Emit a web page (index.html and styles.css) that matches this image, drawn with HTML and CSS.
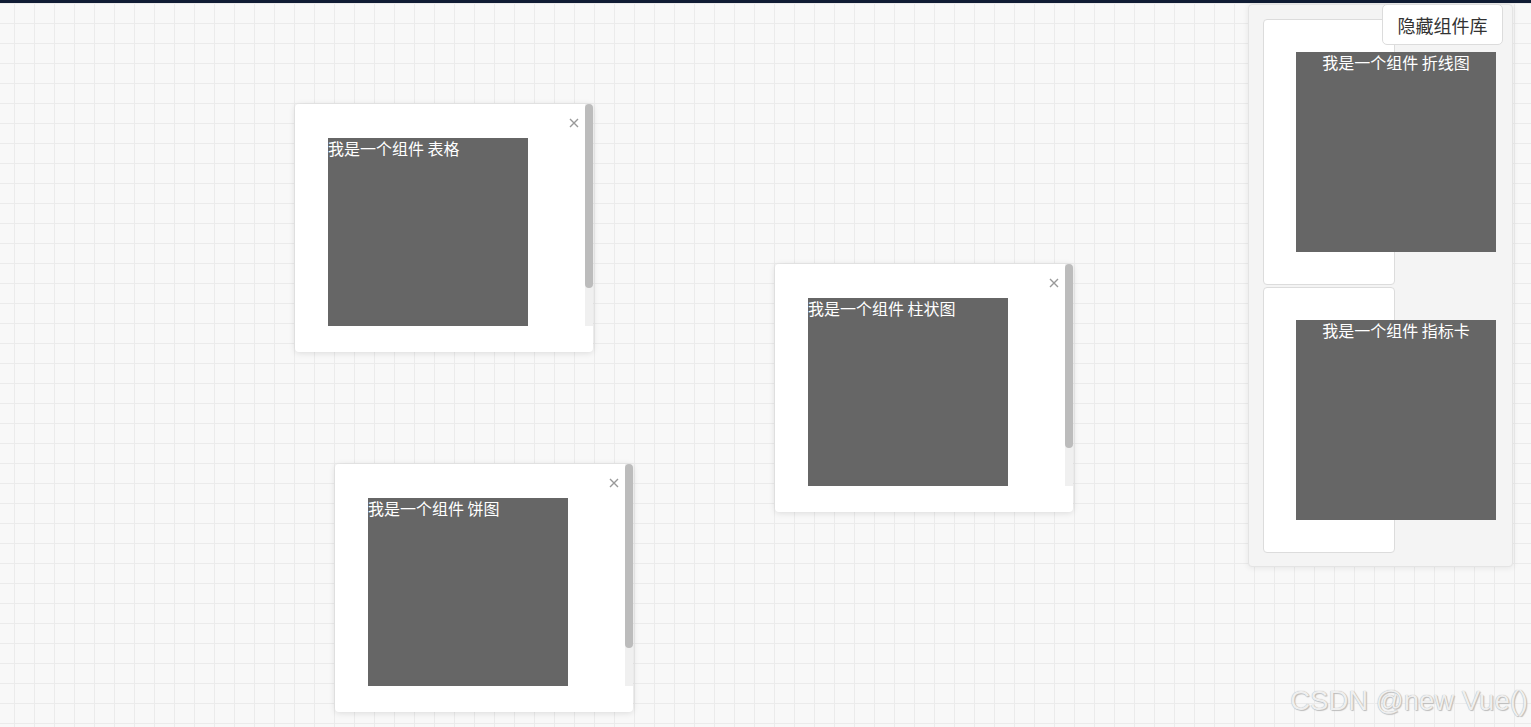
FILE: index.html
```html
<!DOCTYPE html>
<html lang="zh">
<head>
<meta charset="utf-8">
<title>组件画布</title>
<link rel="stylesheet" href="styles.css">
</head>
<body>
<div class="topbar"></div>
<main class="canvas">
  <section class="win" style="left:295px;top:104px">
    <button class="close" aria-label="关闭"><svg viewBox="0 0 10 10" width="10" height="10"><path d="M1 1L9 9M9 1L1 9"/></svg></button>
    <div class="win-body">
      <div class="scroll">
        <div class="block">我是一个组件 表格</div>
      </div>
      <div class="scrollbar"><div class="thumb"></div></div>
    </div>
  </section>
  <section class="win" style="left:775px;top:264px">
    <button class="close" aria-label="关闭"><svg viewBox="0 0 10 10" width="10" height="10"><path d="M1 1L9 9M9 1L1 9"/></svg></button>
    <div class="win-body">
      <div class="scroll">
        <div class="block">我是一个组件 柱状图</div>
      </div>
      <div class="scrollbar"><div class="thumb"></div></div>
    </div>
  </section>
  <section class="win" style="left:335px;top:464px">
    <button class="close" aria-label="关闭"><svg viewBox="0 0 10 10" width="10" height="10"><path d="M1 1L9 9M9 1L1 9"/></svg></button>
    <div class="win-body">
      <div class="scroll">
        <div class="block">我是一个组件 饼图</div>
      </div>
      <div class="scrollbar"><div class="thumb"></div></div>
    </div>
  </section>

  <aside class="library">
    <div class="lib-list">
      <div class="lib-item"><div class="block centered">我是一个组件 折线图</div></div>
      <div class="lib-item"><div class="block centered">我是一个组件 指标卡</div></div>
    </div>
    <button class="toggle">隐藏组件库</button>
  </aside>

  <div class="watermark">CSDN @new Vue()</div>
</main>
</body>
</html>
```
FILE: styles.css
```css
html, body {
  margin: 0;
  padding: 0;
  height: 100%;
  overflow: hidden;
}
body {
  font-family: "Noto Sans CJK SC", "Noto Sans", sans-serif;
  background-color: #f8f8f8;
  background-image:
    linear-gradient(to right, #ebebeb 1px, transparent 1px),
    linear-gradient(to bottom, #ebebeb 1px, transparent 1px);
  background-size: 20px 20px;
  background-position: 14px 23px;
}
.topbar {
  height: 3px;
  background: #101c34;
}
.canvas {
  position: relative;
  height: 724px;
}
.win {
  position: absolute;
  width: 298px;
  height: 248px;
  box-sizing: border-box;
  background: #fff;
  border-radius: 4px;
  box-shadow: 0 1px 6px rgba(0, 0, 0, 0.12);
  margin-top: -3px;
}
.win-body {
  display: flex;
  height: 222px;
}
.scroll {
  flex: 1;
  overflow: hidden;
  box-sizing: border-box;
  padding: 34px 0 0 33px;
}
.scrollbar {
  width: 8px;
  flex: none;
  background: #f0f0f0;
  border-top-right-radius: 4px;
}
.thumb {
  height: 184px;
  background: #bcbcbc;
  border-radius: 4px;
}
.close {
  position: absolute;
  top: 14px;
  right: 14px;
  width: 10px;
  height: 10px;
  padding: 0;
  border: 0;
  background: none;
  display: flex;
  z-index: 2;
}
.close svg path {
  stroke: #999;
  stroke-width: 1.4;
  fill: none;
}
.block {
  width: 200px;
  height: 200px;
  background: #666;
  color: #fff;
  font-size: 16px;
  line-height: 20px;
  flex: none;
}
.block.centered {
  text-align: center;
}
.library {
  position: absolute;
  left: 1248px;
  top: 1px;
  width: 265px;
  height: 563px;
  box-sizing: border-box;
  background: #f4f4f4;
  border: 1px solid #e4e4e4;
  border-radius: 4px;
  box-shadow: 0 1px 6px rgba(0, 0, 0, 0.08);
}
.lib-list {
  display: flex;
  flex-direction: column;
  gap: 2px;
  padding: 14px 0 0 14px;
}
.lib-item {
  width: 132px;
  height: 266px;
  box-sizing: border-box;
  padding: 32px;
  background: #fff;
  border: 1px solid #dcdcdc;
  border-radius: 4px;
}
.toggle {
  position: absolute;
  top: -1px;
  right: 9px;
  width: 121px;
  height: 41px;
  box-sizing: border-box;
  background: #fff;
  border: 1px solid #dcdcdc;
  border-radius: 5px;
  font-family: "Noto Sans CJK SC", "Noto Sans", sans-serif;
  font-size: 18px;
  color: #333;
  padding: 0;
}
.watermark {
  position: absolute;
  right: 3px;
  bottom: 13px;
  font-family: "Liberation Sans", Arial, sans-serif;
  font-size: 27.5px;
  line-height: 27px;
  color: #efefef;
  text-shadow: 0 0 1px #a0a0a0, 1px 1px 1px #c0c0c0;
  white-space: nowrap;
}
```
